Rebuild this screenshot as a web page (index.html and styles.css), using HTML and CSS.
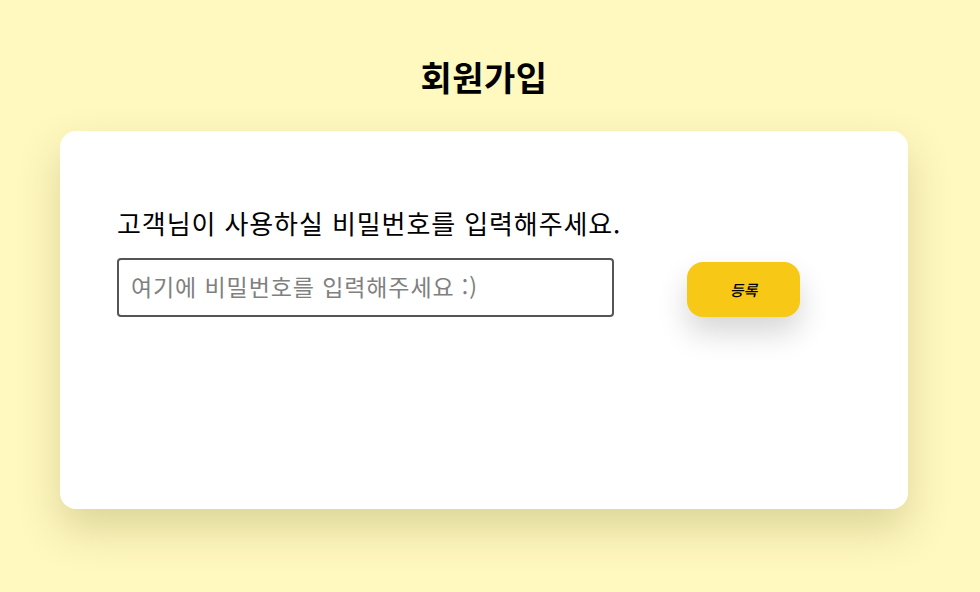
FILE: index.html
```html
<!DOCTYPE html>
<html lang="ko">
<head>
  <meta charset="UTF-8" />
  <meta name="viewport" content="width=device-width, initial-scale=1.0"/>
  <title>회원가입</title>
  <link rel="stylesheet" href="styles.css">
</head>
<body>
  <div class="wrap">
    <h1 class="title">회원가입</h1>

    <div class="card">
      <label class="label" for="password">고객님이 사용하실 비밀번호를 입력해주세요.</label>
      <div class="row">
        <input type="password" id="password" class="pw-input" placeholder="여기에 비밀번호를 입력해주세요 :)" />
        <button type="button" class="submit-btn">등록</button>
      </div>
    </div>
  </div>
</body>
</html>
```

FILE: styles.css
```css
* {
  box-sizing: border-box;
  margin: 0;
  padding: 0;
}

html, body {
  height: 100%;
}

body {
  background: #fff8bf;
  font-family: "Noto Sans CJK KR", "Noto Sans", sans-serif;
  color: #000;
  overflow: hidden;
}

.wrap {
  width: 848px;
  margin-left: 60px;
  padding-top: 52px;
}

.title {
  text-align: center;
  font-size: 34px;
  font-weight: 700;
  line-height: 50px;
  letter-spacing: 0.5px;
  margin-bottom: 29px;
}

.card {
  background: #fff;
  border-radius: 16px;
  height: 378px;
  padding: 70px 57px 0;
  box-shadow: 0 20px 40px rgba(120, 110, 40, 0.25);
}

.label {
  display: block;
  font-size: 26px;
  line-height: 44px;
  letter-spacing: 0.9px;
  margin-bottom: 13px;
}

.row {
  display: flex;
  align-items: flex-end;
}

.pw-input {
  width: 497px;
  height: 59px;
  border: 2px solid #555;
  border-radius: 4px;
  padding: 0 12px 4px;
  font-family: "Noto Sans CJK KR", "Noto Sans", sans-serif;
  font-size: 23px;
  letter-spacing: 0.9px;
  color: #333;
  outline: none;
}

.pw-input::placeholder {
  color: #808080;
}

.submit-btn {
  margin-left: 73px;
  width: 113px;
  height: 55px;
  border: none;
  border-radius: 16px;
  background: #f7c816;
  font-family: "Noto Sans CJK KR", sans-serif;
  font-size: 15px;
  font-weight: 500;
  font-style: italic;
  cursor: pointer;
  box-shadow: 0 16px 30px rgba(0, 0, 0, 0.16);
}
```
